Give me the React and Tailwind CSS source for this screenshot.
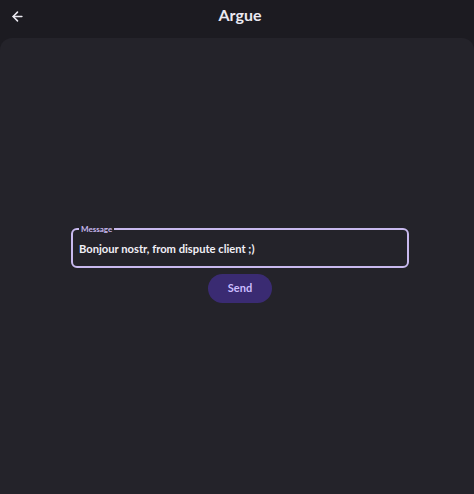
import { ArrowLeft } from "lucide-react";

export default function App() {
  return (
    <div
      className="w-[474px] h-[494px] flex flex-col bg-[#1c1b21] overflow-hidden"
      style={{ fontFamily: "Lato, 'Open Sans', sans-serif" }}
    >
      {/* Header */}
      <div className="h-[38px] flex items-center relative shrink-0 pb-[6px]">
        <button className="ml-[10px] text-[#ebe9f1]">
          <ArrowLeft size={15} strokeWidth={2.5} />
        </button>
        <h1 className="absolute left-[6px] right-0 top-[3px] text-center text-[16px] font-bold text-[#ebe9f1] pointer-events-none">
          Argue
        </h1>
      </div>

      {/* Body */}
      <div className="flex-1 bg-[#24232a] rounded-t-[12px] flex flex-col items-center justify-center pl-[6px]">
        <fieldset className="w-[338px] h-[43px] border-2 border-[#c8b9ee] rounded-[6px] px-[6px] -mt-[5px]">
          <legend className="px-[2px] text-[8px] font-bold leading-none text-[#c8b9ee]">
            Message
          </legend>
          <input
            className="block w-full h-[20px] bg-transparent outline-none text-[11.2px] font-bold text-[#f1eff6] mt-[4px] pt-[3px]"
            defaultValue="Bonjour nostr, from dispute client ;)"
          />
        </fieldset>
        <button className="mt-[6px] w-[64px] h-[29px] rounded-full bg-[#3a2b72] text-[#cbbdff] text-[11px] font-bold">
          Send
        </button>
      </div>
    </div>
  );
}
